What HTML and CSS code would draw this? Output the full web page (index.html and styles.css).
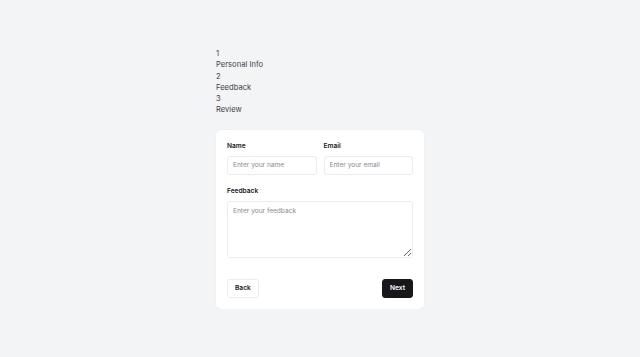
FILE: index.html
```html
<!DOCTYPE html>
<html lang="en">
<head>
    <meta charset="UTF-8">
    <title>Feedback Form</title>
    <link rel="stylesheet" href="styles.css">
</head>
<body>
    <div class="wrapper">
        <div class="steps">
            <div class="step">
                <div>1</div>
                <div>Personal Info</div>
            </div>
            <div class="step">
                <div>2</div>
                <div>Feedback</div>
            </div>
            <div class="step">
                <div>3</div>
                <div>Review</div>
            </div>
        </div>

        <form class="card">
            <div class="row">
                <div class="field">
                    <label for="name">Name</label>
                    <input type="text" id="name" placeholder="Enter your name">
                </div>
                <div class="field">
                    <label for="email">Email</label>
                    <input type="email" id="email" placeholder="Enter your email">
                </div>
            </div>
            <div class="field">
                <label for="feedback">Feedback</label>
                <textarea id="feedback" placeholder="Enter your feedback"></textarea>
            </div>
            <div class="actions">
                <button type="button" class="btn btn-back">Back</button>
                <button type="button" class="btn btn-next">Next</button>
            </div>
        </form>
    </div>
</body>
</html>
```

FILE: styles.css
```css
body {
    margin: 0;
    font-family: Inter, "Liberation Sans", Arial, sans-serif;
    background-color: #f3f4f6;
    color: #18181b;
}
.wrapper {
    width: 208px;
    margin: 0 auto;
    padding-top: 48px;
}
.steps {
    font-size: 7.6px;
    line-height: 11.3px;
    color: #3f3f46;
    margin-bottom: 14px;
}
.card {
    background-color: #fff;
    border-radius: 5px;
    padding: 11px;
    box-shadow: 0 0 2px rgba(0, 0, 0, 0.06);
}
.row {
    display: flex;
    gap: 7px;
}
.row .field {
    flex: 1;
}
.field {
    margin-bottom: 11px;
}
.field label {
    display: block;
    font-size: 6.6px;
    font-weight: 600;
    line-height: 10px;
    margin-bottom: 5px;
}
.field input,
.field textarea {
    display: block;
    width: 100%;
    box-sizing: border-box;
    border: 1px solid #ececef;
    border-radius: 3px;
    font-family: inherit;
    font-size: 6.6px;
    color: #18181b;
    background-color: #fff;
}
.field input {
    height: 19px;
    padding: 0 5px;
}
.field textarea {
    height: 57px;
    padding: 5px;
    resize: vertical;
}
.field input::placeholder,
.field textarea::placeholder {
    color: #8a8a93;
}
.actions {
    display: flex;
    justify-content: space-between;
    margin-top: 21px;
}
.btn {
    height: 19px;
    padding: 0 7px;
    border-radius: 3px;
    font-family: inherit;
    font-size: 6.6px;
    font-weight: 600;
    cursor: pointer;
}
.btn-back {
    background-color: #fff;
    color: #18181b;
    border: 1px solid #ececef;
}
.btn-next {
    background-color: #18181b;
    color: #fff;
    border: 1px solid #18181b;
}
```
